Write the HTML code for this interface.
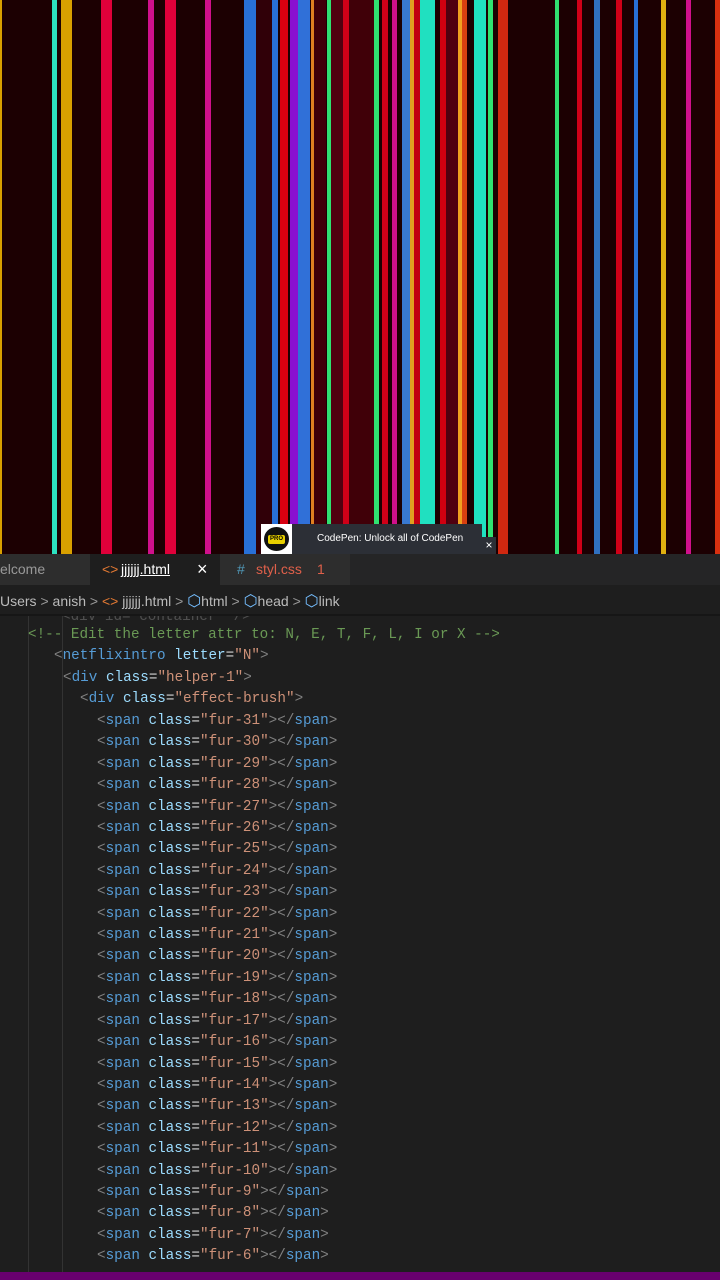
<!DOCTYPE html>
<html><head><meta charset="utf-8"><style>
*{margin:0;padding:0;box-sizing:border-box}
body{width:720px;height:1280px;background:#1e1e1e;position:relative;overflow:hidden;font-family:"Liberation Sans",sans-serif}
#top{position:absolute;left:0;top:0;width:720px;height:554px;background:#1c0002}
.s{position:absolute;top:0;height:554px}
.cl{position:absolute;font-family:"Liberation Mono",monospace;font-size:14.3px;white-space:pre;color:#d4d4d4;line-height:20px}
.g{color:#808080}.t{color:#569cd6}.a{color:#9cdcfe}.v{color:#ce9178}.c{color:#6a9955}
.guide{position:absolute;top:615px;bottom:8px;width:1px;background:#333}
</style></head><body>
<div id="top">
<div class="s" style="left:0;width:2px;background:#d9a000"></div>
<div class="s" style="left:52px;width:5px;background:#2de0c0"></div>
<div class="s" style="left:61px;width:11px;background:#d9a000"></div>
<div class="s" style="left:101px;width:11px;background:#e0003a"></div>
<div class="s" style="left:148px;width:6px;background:#d0108c"></div>
<div class="s" style="left:165px;width:11px;background:#e0003a"></div>
<div class="s" style="left:205px;width:6px;background:#d0108c"></div>
<div class="s" style="left:244px;width:12px;background:#2870d8"></div>
<div class="s" style="left:256px;width:16px;background:#300008"></div>
<div class="s" style="left:272px;width:6px;background:#2870d8"></div>
<div class="s" style="left:280px;width:8px;background:#d80010"></div>
<div class="s" style="left:290px;width:8px;background:#8a10d0"></div>
<div class="s" style="left:298px;width:12px;background:#3070d8"></div>
<div class="s" style="left:311px;width:3px;background:#e08020"></div>
<div class="s" style="left:314px;width:12px;background:#400008"></div>
<div class="s" style="left:327px;width:4px;background:#30e070"></div>
<div class="s" style="left:331px;width:12px;background:#500010"></div>
<div class="s" style="left:343px;width:6px;background:#d00018"></div>
<div class="s" style="left:349px;width:25px;background:#400008"></div>
<div class="s" style="left:374px;width:5px;background:#30e070"></div>
<div class="s" style="left:382px;width:6px;background:#d00018"></div>
<div class="s" style="left:392px;width:5px;background:#d0108c"></div>
<div class="s" style="left:402px;width:8px;background:#3878d0"></div>
<div class="s" style="left:410px;width:4px;background:#e0a020"></div>
<div class="s" style="left:414px;width:6px;background:#c00010"></div>
<div class="s" style="left:420px;width:15px;background:#20e0c0"></div>
<div class="s" style="left:440px;width:6px;background:#d00010"></div>
<div class="s" style="left:446px;width:12px;background:#500010"></div>
<div class="s" style="left:458px;width:4px;background:#f0a020"></div>
<div class="s" style="left:462px;width:5px;background:#d84010"></div>
<div class="s" style="left:474px;width:12px;background:#20e0c0"></div>
<div class="s" style="left:488px;width:5px;background:#30e070"></div>
<div class="s" style="left:498px;width:10px;background:#d02810"></div>
<div class="s" style="left:555px;width:4px;background:#30e070"></div>
<div class="s" style="left:577px;width:5px;background:#d00018"></div>
<div class="s" style="left:594px;width:6px;background:#3070c0"></div>
<div class="s" style="left:616px;width:6px;background:#d00018"></div>
<div class="s" style="left:634px;width:4px;background:#2870d8"></div>
<div class="s" style="left:661px;width:5px;background:#e0b010"></div>
<div class="s" style="left:686px;width:5px;background:#d0108c"></div>
<div class="s" style="left:715px;width:5px;background:#d83010"></div>
</div>
<!-- popup -->
<div style="position:absolute;left:261px;top:524px;width:31px;height:30px;background:#fff"><div style="position:absolute;left:3px;top:3px;width:25px;height:24px;border-radius:50%;background:#111"></div><div style="position:absolute;left:7px;top:11px;width:17px;height:9px;background:#e8d000;border-radius:2px;font-size:6px;font-weight:bold;text-align:center;line-height:9px">PRO</div></div>
<div style="position:absolute;left:292px;top:524px;width:190px;height:30px;background:#2c2f36;color:#fff;font-size:10px;line-height:30px;padding-left:25px">CodePen: Unlock all of CodePen</div>
<div style="position:absolute;left:482px;top:537px;width:14px;height:17px;background:#2c2f36;color:#fff;font-size:12px;text-align:center;line-height:17px">×</div>
<!-- tabs -->
<div style="position:absolute;left:0;top:554px;width:720px;height:31px;background:#252526"></div>
<div style="position:absolute;left:0;top:554px;width:90px;height:31px;background:#2d2d2d;color:#999;font-size:14px;line-height:31px">elcome</div>
<div style="position:absolute;left:90px;top:554px;width:130px;height:31px;background:#1e1e1e;font-size:14px;line-height:31px"><span style="position:absolute;left:12px;color:#e37933">&lt;&gt;</span><span style="position:absolute;left:31px;color:#fff;text-decoration:underline">jjjjjj.html</span><span style="position:absolute;left:107px;color:#fff;font-size:18px">×</span></div>
<div style="position:absolute;left:220px;top:554px;width:130px;height:31px;background:#2d2d2d;font-size:14px;line-height:31px"><span style="position:absolute;left:17px;color:#519aba">#</span><span style="position:absolute;left:36px;color:#e0604a">styl.css</span><span style="position:absolute;left:97px;color:#e0604a">1</span></div>
<div class="guide" style="left:28px"></div><div class="guide" style="left:62px"></div>
<div class="cl g" style="left:62px;top:607px;opacity:.5">&lt;div id="container" /&gt;</div>
<!-- breadcrumbs -->
<div style="position:absolute;left:0;top:585px;width:720px;height:29px;background:#1e1e1e"></div>
<div style="position:absolute;left:0;top:590px;font-size:14px;color:#bbb;line-height:22px;white-space:pre">Users <span style="color:#999">&gt;</span> anish <span style="color:#999">&gt;</span> <span style="color:#e37933">&lt;&gt;</span> jjjjjj.html <span style="color:#999">&gt;</span> <span style="color:#75beff;font-size:16px">⬡</span>html <span style="color:#999">&gt;</span> <span style="color:#75beff;font-size:16px">⬡</span>head <span style="color:#999">&gt;</span> <span style="color:#75beff;font-size:16px">⬡</span>link</div>
<div style="position:absolute;left:0;top:614px;width:720px;height:2px;background:#161616"></div>
<div class="cl c" style="left:28px;top:625px">&lt;!-- Edit the letter attr to: N, E, T, F, L, I or X --&gt;</div>
<div class="cl" style="left:54px;top:646px"><span class="g">&lt;</span><span class="t">netflixintro</span> <span class="a">letter</span>=<span class="v">"N"</span><span class="g">&gt;</span></div>
<div class="cl" style="left:63px;top:668px"><span class="g">&lt;</span><span class="t">div</span> <span class="a">class</span>=<span class="v">"helper-1"</span><span class="g">&gt;</span></div>
<div class="cl" style="left:80px;top:689px"><span class="g">&lt;</span><span class="t">div</span> <span class="a">class</span>=<span class="v">"effect-brush"</span><span class="g">&gt;</span></div>
<div style="position:absolute;left:0;top:1272px;width:720px;height:8px;background:#68006e"></div>
<div class="cl" style="left:97px;top:711px;line-height:21.4px"><span class="g">&lt;</span><span class="t">span</span> <span class="a">class</span>=<span class="v">"fur-31"</span><span class="g">&gt;&lt;/</span><span class="t">span</span><span class="g">&gt;</span>
<span class="g">&lt;</span><span class="t">span</span> <span class="a">class</span>=<span class="v">"fur-30"</span><span class="g">&gt;&lt;/</span><span class="t">span</span><span class="g">&gt;</span>
<span class="g">&lt;</span><span class="t">span</span> <span class="a">class</span>=<span class="v">"fur-29"</span><span class="g">&gt;&lt;/</span><span class="t">span</span><span class="g">&gt;</span>
<span class="g">&lt;</span><span class="t">span</span> <span class="a">class</span>=<span class="v">"fur-28"</span><span class="g">&gt;&lt;/</span><span class="t">span</span><span class="g">&gt;</span>
<span class="g">&lt;</span><span class="t">span</span> <span class="a">class</span>=<span class="v">"fur-27"</span><span class="g">&gt;&lt;/</span><span class="t">span</span><span class="g">&gt;</span>
<span class="g">&lt;</span><span class="t">span</span> <span class="a">class</span>=<span class="v">"fur-26"</span><span class="g">&gt;&lt;/</span><span class="t">span</span><span class="g">&gt;</span>
<span class="g">&lt;</span><span class="t">span</span> <span class="a">class</span>=<span class="v">"fur-25"</span><span class="g">&gt;&lt;/</span><span class="t">span</span><span class="g">&gt;</span>
<span class="g">&lt;</span><span class="t">span</span> <span class="a">class</span>=<span class="v">"fur-24"</span><span class="g">&gt;&lt;/</span><span class="t">span</span><span class="g">&gt;</span>
<span class="g">&lt;</span><span class="t">span</span> <span class="a">class</span>=<span class="v">"fur-23"</span><span class="g">&gt;&lt;/</span><span class="t">span</span><span class="g">&gt;</span>
<span class="g">&lt;</span><span class="t">span</span> <span class="a">class</span>=<span class="v">"fur-22"</span><span class="g">&gt;&lt;/</span><span class="t">span</span><span class="g">&gt;</span>
<span class="g">&lt;</span><span class="t">span</span> <span class="a">class</span>=<span class="v">"fur-21"</span><span class="g">&gt;&lt;/</span><span class="t">span</span><span class="g">&gt;</span>
<span class="g">&lt;</span><span class="t">span</span> <span class="a">class</span>=<span class="v">"fur-20"</span><span class="g">&gt;&lt;/</span><span class="t">span</span><span class="g">&gt;</span>
<span class="g">&lt;</span><span class="t">span</span> <span class="a">class</span>=<span class="v">"fur-19"</span><span class="g">&gt;&lt;/</span><span class="t">span</span><span class="g">&gt;</span>
<span class="g">&lt;</span><span class="t">span</span> <span class="a">class</span>=<span class="v">"fur-18"</span><span class="g">&gt;&lt;/</span><span class="t">span</span><span class="g">&gt;</span>
<span class="g">&lt;</span><span class="t">span</span> <span class="a">class</span>=<span class="v">"fur-17"</span><span class="g">&gt;&lt;/</span><span class="t">span</span><span class="g">&gt;</span>
<span class="g">&lt;</span><span class="t">span</span> <span class="a">class</span>=<span class="v">"fur-16"</span><span class="g">&gt;&lt;/</span><span class="t">span</span><span class="g">&gt;</span>
<span class="g">&lt;</span><span class="t">span</span> <span class="a">class</span>=<span class="v">"fur-15"</span><span class="g">&gt;&lt;/</span><span class="t">span</span><span class="g">&gt;</span>
<span class="g">&lt;</span><span class="t">span</span> <span class="a">class</span>=<span class="v">"fur-14"</span><span class="g">&gt;&lt;/</span><span class="t">span</span><span class="g">&gt;</span>
<span class="g">&lt;</span><span class="t">span</span> <span class="a">class</span>=<span class="v">"fur-13"</span><span class="g">&gt;&lt;/</span><span class="t">span</span><span class="g">&gt;</span>
<span class="g">&lt;</span><span class="t">span</span> <span class="a">class</span>=<span class="v">"fur-12"</span><span class="g">&gt;&lt;/</span><span class="t">span</span><span class="g">&gt;</span>
<span class="g">&lt;</span><span class="t">span</span> <span class="a">class</span>=<span class="v">"fur-11"</span><span class="g">&gt;&lt;/</span><span class="t">span</span><span class="g">&gt;</span>
<span class="g">&lt;</span><span class="t">span</span> <span class="a">class</span>=<span class="v">"fur-10"</span><span class="g">&gt;&lt;/</span><span class="t">span</span><span class="g">&gt;</span>
<span class="g">&lt;</span><span class="t">span</span> <span class="a">class</span>=<span class="v">"fur-9"</span><span class="g">&gt;&lt;/</span><span class="t">span</span><span class="g">&gt;</span>
<span class="g">&lt;</span><span class="t">span</span> <span class="a">class</span>=<span class="v">"fur-8"</span><span class="g">&gt;&lt;/</span><span class="t">span</span><span class="g">&gt;</span>
<span class="g">&lt;</span><span class="t">span</span> <span class="a">class</span>=<span class="v">"fur-7"</span><span class="g">&gt;&lt;/</span><span class="t">span</span><span class="g">&gt;</span>
<span class="g">&lt;</span><span class="t">span</span> <span class="a">class</span>=<span class="v">"fur-6"</span><span class="g">&gt;&lt;/</span><span class="t">span</span><span class="g">&gt;</span></div>
</body></html>
